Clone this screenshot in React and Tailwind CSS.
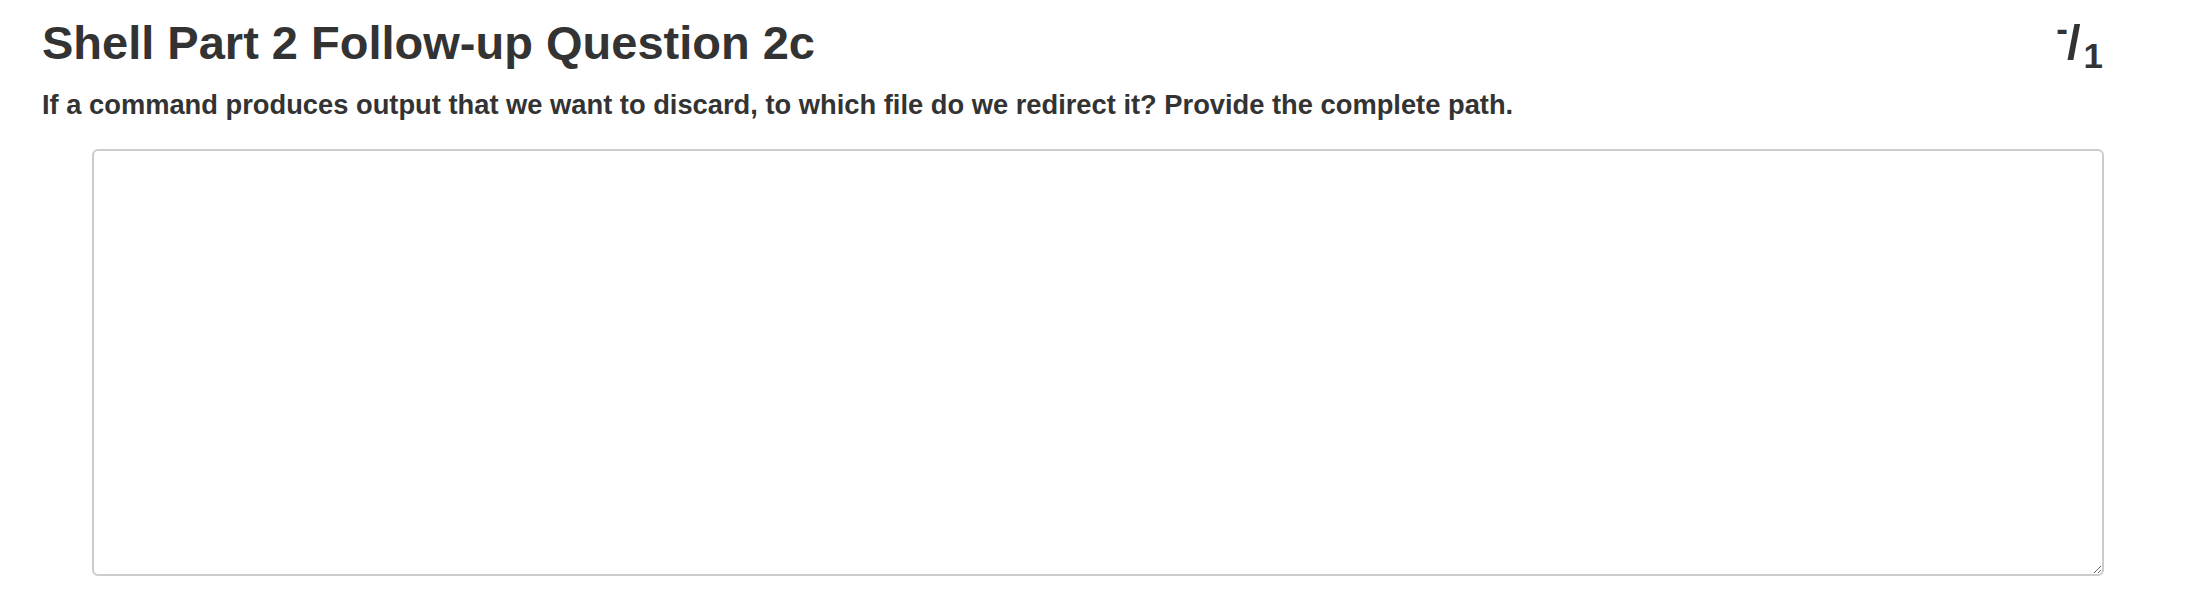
import React from 'react';

const font = { fontFamily: '"Liberation Sans", Arial, Helvetica, sans-serif' };

const Score = ({ got, max }) => (
  <div className="text-[49px] font-bold leading-[1.1] text-[#333] whitespace-nowrap">
    <span className="text-[35px] align-[18px] mr-[-1px]">{got}</span>
    <span>/</span>
    <span className="text-[35px] align-[-9px] ml-[3px]">{max}</span>
  </div>
);

export default function App() {
  return (
    <div className="min-h-screen bg-white text-[#333] pl-[42px] pr-[103px] pt-[10px]" style={font}>
      {/* 見出し + 点数 */}
      <div className="flex items-baseline justify-between">
        <h2 className="text-[47px] font-bold leading-[1.1]">Shell Part 2 Follow-up Question 2c</h2>
        <Score got="-" max="1" />
      </div>

      <p className="mt-[13px] text-[27.3px] font-bold leading-[1.2]">
        If a command produces output that we want to discard, to which file do we redirect it? Provide the complete path.
      </p>

      {/* 回答欄 */}
      <div className="mt-[28px] pl-[50px] mr-[-1px]">
        <textarea
          className="block w-full h-[427px] border-2 border-[#ccc] rounded-[6px] bg-white p-3 text-[27px] outline-none"
          style={font}
        />
      </div>
    </div>
  );
}
